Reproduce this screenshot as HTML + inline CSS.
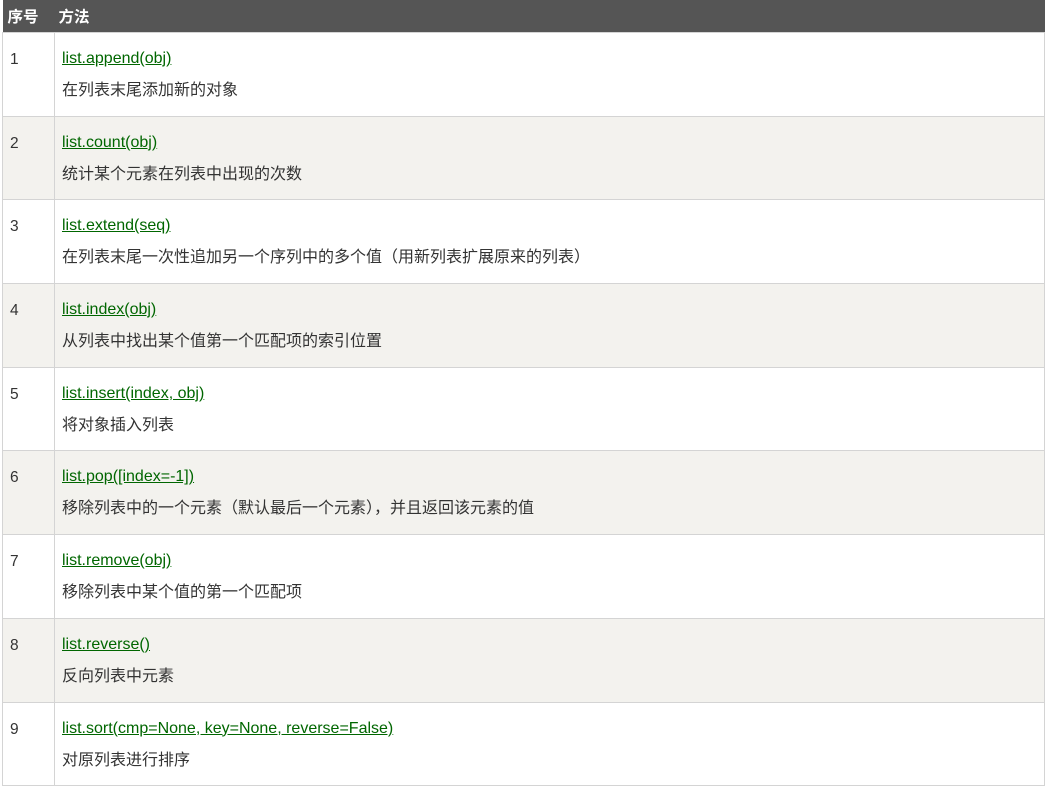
<!DOCTYPE html>
<html><head><meta charset="utf-8"><style>
body{margin:0;background:#fff;font-family:"Liberation Sans","Noto Sans CJK SC",sans-serif;font-size:16px;color:#333}
table{position:absolute;left:2px;top:0px;width:1043px;border-collapse:collapse;table-layout:fixed}
th{background:#555;color:#fff;text-align:left;height:32px;padding:0 0 0 5px;font-size:15.5px;font-weight:bold}
td{border:1px solid #d4d4d4;vertical-align:top;padding:0 7px;height:83.7px;box-sizing:border-box}
tr.g td{background:#f3f2ee}
td.n{padding-left:7px;padding-top:17px;line-height:20px;font-size:15.5px}
td p{margin:0}
a{color:#006600;text-decoration:underline}
.l{padding-top:16px;line-height:20px}
.d{padding-top:12px;line-height:20px}
</style></head><body>
<table>
<colgroup><col style="width:52px"><col></colgroup>
<tr><th>序号</th><th style="padding-left:4px">方法</th></tr>
<tr><td class="n">1</td><td><p class="l"><a>list.append(obj)</a></p><p class="d">在列表末尾添加新的对象</p></td></tr>
<tr class="g"><td class="n">2</td><td><p class="l"><a>list.count(obj)</a></p><p class="d">统计某个元素在列表中出现的次数</p></td></tr>
<tr><td class="n">3</td><td><p class="l"><a>list.extend(seq)</a></p><p class="d">在列表末尾一次性追加另一个序列中的多个值（用新列表扩展原来的列表）</p></td></tr>
<tr class="g"><td class="n">4</td><td><p class="l"><a>list.index(obj)</a></p><p class="d">从列表中找出某个值第一个匹配项的索引位置</p></td></tr>
<tr><td class="n">5</td><td><p class="l"><a>list.insert(index, obj)</a></p><p class="d">将对象插入列表</p></td></tr>
<tr class="g"><td class="n">6</td><td><p class="l"><a>list.pop([index=-1])</a></p><p class="d">移除列表中的一个元素（默认最后一个元素），并且返回该元素的值</p></td></tr>
<tr><td class="n">7</td><td><p class="l"><a>list.remove(obj)</a></p><p class="d">移除列表中某个值的第一个匹配项</p></td></tr>
<tr class="g"><td class="n">8</td><td><p class="l"><a>list.reverse()</a></p><p class="d">反向列表中元素</p></td></tr>
<tr><td class="n">9</td><td><p class="l"><a>list.sort(cmp=None, key=None, reverse=False)</a></p><p class="d">对原列表进行排序</p></td></tr>
</table>
</body></html>
